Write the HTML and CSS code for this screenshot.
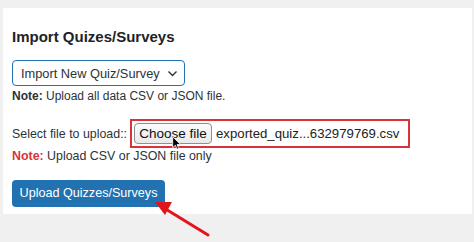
FILE: index.html
```html
<!DOCTYPE html>
<html>
<head>
<meta charset="utf-8">
<link rel="stylesheet" href="styles.css">
</head>
<body>
<div class="panel">
  <h2 class="title">Import Quizes/Surveys</h2>
  <div class="select">
    <span>Import New Quiz/Survey</span>
    <svg class="chev" width="11" height="7" viewBox="0 0 11 7"><path d="M1.5 1.5l4 4 4-4" fill="none" stroke="#2c3338" stroke-width="1.4"/></svg>
  </div>
  <p class="note"><b>Note:</b> Upload all data CSV or JSON file.</p>
  <div class="filerow">
    <span class="label">Select file to upload::</span>
    <div class="filebox">
      <span class="choose">Choose file</span>
      <span class="fname">exported_quiz...632979769.csv</span>
    </div>
  </div>
  <p class="note2"><b>Note:</b> Upload CSV or JSON file only</p>
  <div class="btnrow"><span class="upload">Upload Quizzes/Surveys</span></div>
</div>
<svg class="cursor" width="9" height="14" viewBox="0 0 9 14"><path d="M0.7 0.7v11l2.6-2.5 1.8 4 1.6-0.7-1.7-3.9h3.5z" fill="#000" stroke="#fff" stroke-width="0.8"/></svg>
<svg class="arrow" width="70" height="50" viewBox="0 0 70 50"><line x1="56" y1="43" x2="12" y2="16" stroke="#e3141b" stroke-width="3" stroke-linecap="round"/><path d="M3 10l17 0-7 13z" fill="#e3141b"/></svg>
</body>
</html>
```
FILE: styles.css
```css
html,body{margin:0;padding:0}
body{background:#f0f0f1;width:474px;height:242px;overflow:hidden;position:relative;font-family:"Liberation Sans",Arial,sans-serif;color:#1d2327}
.panel{background:#fff;margin:8px 2px 0 3px;padding:20px 9px 7px;display:flex;flex-direction:column;align-items:flex-start}
.panel > *{flex-shrink:0}
.title{margin:0;font-size:15px;font-weight:bold;line-height:18px;color:#1d2327}
.select{margin-top:14px;box-sizing:border-box;height:26px;width:173px;border:1px solid #2271b1;border-radius:4px;display:flex;align-items:center;justify-content:space-between;padding:0 6px 0 8px;font-size:12.8px;color:#2c3338;white-space:nowrap}
.chev{margin-top:1px}
.note{margin:2px 0 0;font-size:12px;line-height:16px;color:#2c3338;white-space:nowrap}
.filerow{margin-top:15px;display:flex;align-items:center}
.label{font-size:12.4px;color:#2c3338;margin-right:3px;white-space:nowrap}
.filebox{box-sizing:border-box;height:29px;width:280px;border:2px solid #d8323c;display:flex;align-items:center;padding-left:2px;white-space:nowrap}
.choose{box-sizing:border-box;height:21px;width:78px;text-align:center;border:1px solid #8f8f8f;border-radius:4px;background:linear-gradient(#fbfbfb,#e9e9e9);font-size:13.5px;line-height:19px;color:#111}
.fname{margin-left:4px;font-size:13.2px;color:#222}
.note2{margin:0;font-size:12.4px;line-height:16px;color:#2c3338;white-space:nowrap}
.note2 b{color:#d63638}
.btnrow{margin-top:16px}
.upload{display:inline-block;box-sizing:border-box;height:27px;width:153px;background:#2271b1;color:#fff;border-radius:4px;font-size:12.6px;line-height:27px;text-align:center;white-space:nowrap}
.cursor{position:absolute;left:172px;top:136px}
.arrow{position:absolute;left:152px;top:192px}
```
